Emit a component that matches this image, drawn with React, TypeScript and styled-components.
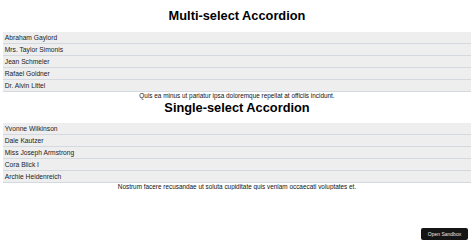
import * as React from "react";
import styled, { createGlobalStyle } from "styled-components";

const GlobalStyle = createGlobalStyle`
  body {
    margin: 3.2px;
    font-family: "Liberation Sans", Arial, sans-serif;
    color: #000;
    background: #fff;
  }
`;

const Title = styled.h1<{ $first?: boolean }>`
  font-size: 12.8px;
  font-weight: bold;
  text-align: center;
  margin: ${p => (p.$first ? "5.2px" : "0.6px")} 0 8.6px 0;
`;

const List = styled.div`
  display: flex;
  flex-direction: column;
`;

const Header = styled.button`
  display: flex;
  align-items: center;
  height: 12px;
  padding: 0 0 0 1.6px;
  border: none;
  border-bottom: 1px solid #d3d9df;
  background: #eeeeee;
  font-family: inherit;
  font-size: 6.7px;
  color: #222;
  text-align: left;
  cursor: pointer;
`;

const Body = styled.p`
  margin: 0;
  font-size: 6.4px;
  text-align: center;
  color: #111;
`;

const SandboxButton = styled.a`
  position: fixed;
  right: 6px;
  bottom: 8px;
  width: 47px;
  height: 12px;
  display: flex;
  align-items: center;
  justify-content: center;
  background: #151515;
  border-radius: 2px;
  color: #e8e8e8;
  font-size: 5px;
  text-decoration: none;
`;

interface AccordionProps {
  title: string;
  items: string[];
  text: string;
  first?: boolean;
}

const Accordion: React.FC<AccordionProps> = ({ title, items, text, first }) => (
  <section>
    <Title $first={first}>{title}</Title>
    <List>
      {items.map(item => (
        <Header key={item}>{item}</Header>
      ))}
    </List>
    <Body>{text}</Body>
  </section>
);

const App: React.FC = () => (
  <>
    <GlobalStyle />
    <Accordion
      first
      title="Multi-select Accordion"
      items={["Abraham Gaylord", "Mrs. Taylor Simonis", "Jean Schmeler", "Rafael Goldner", "Dr. Alvin Littel"]}
      text="Quis ea minus ut pariatur ipsa doloremque repellat at officiis incidunt."
    />
    <Accordion
      title="Single-select Accordion"
      items={["Yvonne Wilkinson", "Dale Kautzer", "Miss Joseph Armstrong", "Cora Blick I", "Archie Heidenreich"]}
      text="Nostrum facere recusandae ut soluta cupiditate quis veniam occaecati voluptates et."
    />
    <SandboxButton href="#">Open Sandbox</SandboxButton>
  </>
);

export default App;
